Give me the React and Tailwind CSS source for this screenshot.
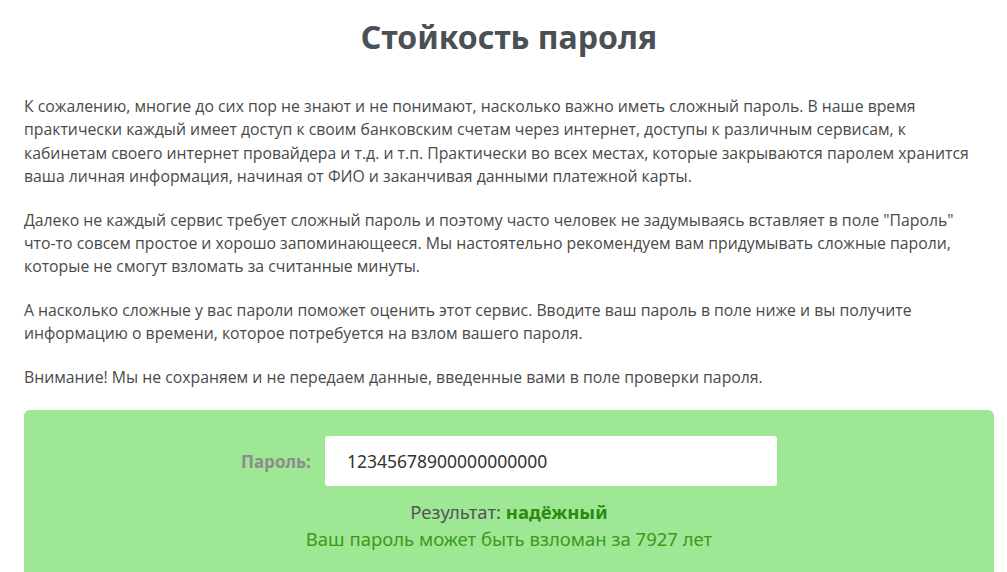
import React from "react";

const body = { fontFamily: '"Open Sans", "Noto Sans", sans-serif' };
const head = { fontFamily: '"Noto Sans", "Open Sans", sans-serif' };

export default function App() {
  return (
    <div className="min-h-[572px] bg-white pl-6 pr-[13px] text-[#4a4a4a]" style={body}>
      <h1 className="pt-[17px] pb-[38px] text-center text-[32px] font-bold leading-[40px] text-[#4b5055]" style={head}>
        Стойкость пароля
      </h1>
      <div className="space-y-[20.5px] text-[15.8px] leading-[23.3px]">
        <p>
          К сожалению, многие до сих пор не знают и не понимают, насколько важно иметь сложный пароль. В наше время
          <br />
          практически каждый имеет доступ к своим банковским счетам через интернет, доступы к различным сервисам, к
          <br />
          кабинетам своего интернет провайдера и т.д. и т.п. Практически во всех местах, которые закрываются паролем хранится
          <br />
          ваша личная информация, начиная от ФИО и заканчивая данными платежной карты.
        </p>
        <p>
          Далеко не каждый сервис требует сложный пароль и поэтому часто человек не задумываясь вставляет в поле "Пароль"
          <br />
          что-то совсем простое и хорошо запоминающееся. Мы настоятельно рекомендуем вам придумывать сложные пароли,
          <br />
          которые не смогут взломать за считанные минуты.
        </p>
        <p>
          А насколько сложные у вас пароли поможет оценить этот сервис. Вводите ваш пароль в поле ниже и вы получите
          <br />
          информацию о времени, которое потребуется на взлом вашего пароля.
        </p>
        <p>Внимание! Мы не сохраняем и не передаем данные, введенные вами в поле проверки пароля.</p>
      </div>

      <div className="mt-[21px] min-h-[162px] rounded-t-md bg-[#9ee794] pt-[26px] pb-6">
        <div className="flex items-center justify-center">
          <label className="w-[69px] text-right text-[17px] font-bold text-[#8c8c8c]" style={head}>
            Пароль:
          </label>
          <input
            className="ml-[15px] h-[50px] w-[452px] rounded-[3px] bg-white px-[22px] text-[17.5px] text-[#333] outline-none"
            style={head}
            defaultValue="12345678900000000000"
          />
        </div>
        <div className="mt-[12px] text-center text-[18.5px] leading-[27px]" style={head}>
          <div className="text-[#555]">
            Результат: <span className="font-bold text-[#2c8a10]">надёжный</span>
          </div>
          <div className="text-[#3c9a18]">Ваш пароль может быть взломан за 7927 лет</div>
        </div>
      </div>
    </div>
  );
}
